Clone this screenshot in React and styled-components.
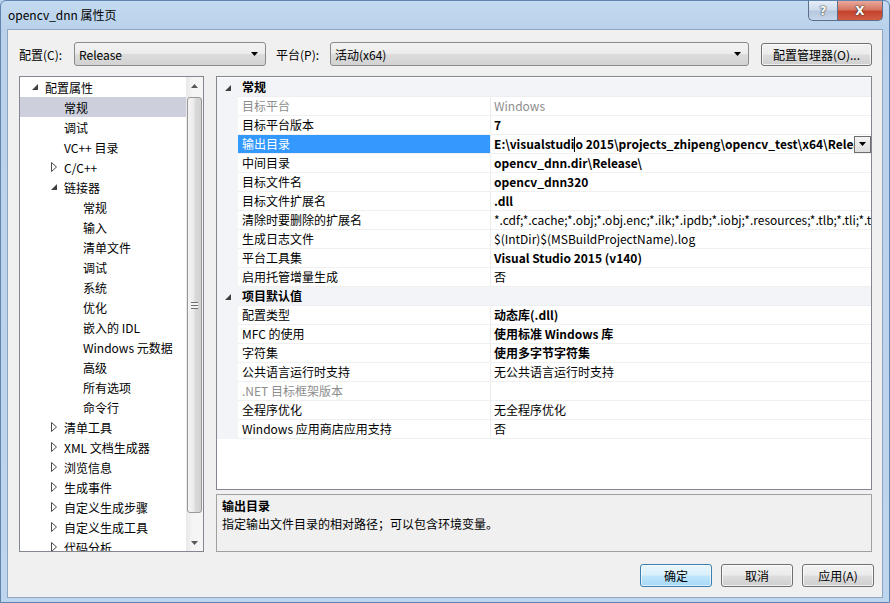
import React from "react";
import styled, { createGlobalStyle, css } from "styled-components";

const FONT = `"Noto Sans CJK SC", "Noto Sans", sans-serif`;

const Global = createGlobalStyle`
  html, body { margin: 0; padding: 0; background: #bcd4ee; }
  body { font-family: ${FONT}; font-size: 12px; color: #000; }
  * { box-sizing: border-box; }
`;

const Window = styled.div`
  width: 890px;
  height: 603px;
  display: flex;
  flex-direction: column;
  border: 1px solid #5f84ad;
  border-radius: 6px 6px 0 0;
  background: linear-gradient(to bottom, #c4daf2 0, #b9d1ea 28px, #bed5ee 100%);
  padding: 0 6px 4px 6px;
  overflow: hidden;
`;

const TitleBar = styled.div`
  height: 28px;
  display: flex;
  align-items: flex-start;
  flex-shrink: 0;
`;

const Title = styled.div`
  margin: 5px 0 0 1px;
  line-height: 18px;
  font-size: 12px;
  color: #000;
`;

const CaptionGroup = styled.div`
  margin-left: auto;
  display: flex;
`;

const CaptionButton = styled.div`
  height: 20px;
  width: ${(p) => p.$w}px;
  display: flex;
  align-items: center;
  justify-content: center;
  border: 1px solid #5b6f8c;
  border-top: none;
  font-family: "DejaVu Sans", sans-serif;
  font-weight: bold;
  font-size: 12px;
  color: #fff;
  text-shadow: 0 0 2px #333, 0 0 1px #222;
  ${(p) =>
    p.$close
      ? css`
          border-radius: 0 0 5px 0;
          background: linear-gradient(to bottom, #e9a99d 0, #d67663 45%, #c4432d 55%, #d25c45 100%);
        `
      : css`
          border-radius: 0 0 0 5px;
          border-right: none;
          background: linear-gradient(to bottom, #e6eef8 0, #cfdcec 45%, #b7c9df 55%, #c6d6ea 100%);
        `}
`;

const Client = styled.div`
  flex: 1;
  display: flex;
  flex-direction: column;
  background: #f0f0f0;
  border: 1px solid #8ea6c2;
  padding: 12px 10px 10px 11px;
`;

const Toolbar = styled.div`
  height: 24px;
  display: flex;
  align-items: center;
  flex-shrink: 0;
`;

const Label = styled.div`
  width: ${(p) => p.$w}px;
  margin-left: ${(p) => p.$ml || 0}px;
  white-space: nowrap;
`;

const Select = styled.div`
  height: 24px;
  ${(p) => (p.$w ? css`width: ${p.$w}px;` : css`flex: 1;`)}
  border: 1px solid #8a8a8a;
  border-radius: 3px;
  background: linear-gradient(to bottom, #f3f3f3 0, #ececec 48%, #dcdcdc 52%, #d2d2d2 100%);
  display: flex;
  align-items: center;
  padding: 0 7px 0 4px;
`;

const SelectText = styled.span`
  flex: 1;
`;

const Button = styled.div`
  height: ${(p) => p.$h || 23}px;
  width: ${(p) => p.$w}px;
  margin-left: ${(p) => p.$ml || 0}px;
  border: 1px solid ${(p) => (p.$default ? "#3c7fb1" : "#707070")};
  border-radius: 3px;
  display: flex;
  align-items: center;
  justify-content: center;
  white-space: nowrap;
  background: ${(p) =>
    p.$default
      ? "linear-gradient(to bottom, #eaf6fd 0, #d9f0fc 48%, #bee6fd 52%, #a7d9f5 100%)"
      : "linear-gradient(to bottom, #f2f2f2 0, #ebebeb 48%, #dddddd 52%, #cfcfcf 100%)"};
  box-shadow: inset 0 0 0 1px ${(p) => (p.$default ? "rgba(255,255,255,0.6)" : "rgba(255,255,255,0.7)")};
`;

const Panels = styled.div`
  margin-top: 10px;
  height: 476px;
  display: flex;
  gap: 12px;
  flex-shrink: 0;
`;

const TreePanel = styled.div`
  width: 185px;
  border: 1px solid #828790;
  background: #fff;
  display: flex;
`;

const TreeList = styled.div`
  flex: 1;
  overflow: hidden;
`;

const TreeRow = styled.div`
  height: 20px;
  display: flex;
  align-items: center;
  padding-left: ${(p) => 12 + p.$level * 19}px;
  white-space: nowrap;
  background: ${(p) => (p.$selected ? "#cdd0dc" : "transparent")};
`;

const ArrowBox = styled.span`
  width: 13px;
  height: 20px;
  display: flex;
  align-items: center;
  flex-shrink: 0;
`;

const ScrollBar = styled.div`
  width: 17px;
  display: flex;
  flex-direction: column;
  background: linear-gradient(to right, #e8e8e8, #f5f5f5 40%, #f5f5f5);
`;

const ScrollArrow = styled.div`
  height: 17px;
  display: flex;
  align-items: center;
  justify-content: center;
  flex-shrink: 0;
`;

const ScrollTrack = styled.div`
  flex: 1;
  padding-top: 3px;
`;

const Thumb = styled.div`
  height: 416px;
  margin: 0 1px;
  border: 1px solid #989898;
  border-radius: 3px;
  background: linear-gradient(to right, #f4f4f4 0, #ebebeb 45%, #dadada 55%, #d1d1d1 100%);
  display: flex;
  align-items: center;
  justify-content: center;
`;

const Grip = styled.div`
  width: 7px;
  height: 7px;
  background: repeating-linear-gradient(to bottom, #6f6f6f 0, #6f6f6f 1px, #f3f3f3 1px, #f3f3f3 3px);
`;

const RightColumn = styled.div`
  flex: 1;
  display: flex;
  flex-direction: column;
  gap: 4px;
`;

const Grid = styled.div`
  height: 414px;
  border: 1px solid #828790;
  background: #fff;
  overflow: hidden;
  padding-top: 1px;
`;

const Row = styled.div`
  height: 19px;
  display: grid;
  grid-template-columns: 21px 253px 1fr;
`;

const Gutter = styled.div`
  background: #f2f4f8;
  display: flex;
  align-items: center;
  justify-content: center;
`;

const CategoryCell = styled.div`
  grid-column: 2 / 4;
  background: #f2f4f8;
  border-bottom: 1px solid #eceef2;
  font-weight: bold;
  padding-left: 4px;
  line-height: 18px;
`;

const NameCell = styled.div`
  border-bottom: 1px solid #f0f0f0;
  border-right: 1px solid #ececec;
  padding-left: 4px;
  line-height: 18px;
  white-space: nowrap;
  overflow: hidden;
  color: ${(p) => (p.$selected ? "#fff" : p.$disabled ? "#8d8d8d" : "#000")};
  background: ${(p) => (p.$selected ? "#3399ff" : "transparent")};
`;

const ValueCell = styled.div`
  border-bottom: 1px solid #f0f0f0;
  padding-left: 3px;
  line-height: 18px;
  white-space: nowrap;
  overflow: hidden;
  display: flex;
  align-items: center;
  font-weight: ${(p) => (p.$bold ? "bold" : "normal")};
  color: ${(p) => (p.$disabled ? "#8d8d8d" : "#000")};
`;

const ValueText = styled.span`
  flex: 1;
  overflow: hidden;
  white-space: nowrap;
`;

const Caret = styled.span`
  display: inline-block;
  width: 1px;
  height: 15px;
  background: #000;
  vertical-align: -3px;
`;

const DropButton = styled.div`
  width: 17px;
  height: 17px;
  flex-shrink: 0;
  border: 1px solid #6e6e6e;
  background: linear-gradient(to bottom, #f4f4f4, #dedede);
  display: flex;
  align-items: center;
  justify-content: center;
`;

const Description = styled.div`
  height: 58px;
  border: 1px solid #a0a0a0;
  background: #f0f0f0;
  padding: 2px 5px;
  line-height: 18px;
`;

const DescTitle = styled.div`
  font-weight: bold;
`;

const Footer = styled.div`
  margin-top: 12px;
  height: 23px;
  display: flex;
  justify-content: flex-end;
  gap: 9px;
  margin-right: -2px;
`;

const ExpandedArrow = () => (
  <svg width="6" height="6" viewBox="0 0 6 6">
    <path d="M6 0 L6 6 L0 6 Z" fill="#404040" />
  </svg>
);

const CollapsedArrow = () => (
  <svg width="7" height="10" viewBox="0 0 7 10">
    <path d="M0.5 0.5 L5.5 5 L0.5 9.5 Z" fill="#fff" stroke="#4a4a4a" strokeWidth="1" />
  </svg>
);

const DownTri = ({ color = "#000" }) => (
  <svg width="7" height="4" viewBox="0 0 7 4">
    <path d="M0 0 L7 0 L3.5 4 Z" fill={color} />
  </svg>
);

const UpTri = ({ color = "#000" }) => (
  <svg width="7" height="4" viewBox="0 0 7 4">
    <path d="M0 4 L7 4 L3.5 0 Z" fill={color} />
  </svg>
);

const tree = [
  { level: 0, text: "配置属性", arrow: "open" },
  { level: 1, text: "常规", selected: true },
  { level: 1, text: "调试" },
  { level: 1, text: "VC++ 目录" },
  { level: 1, text: "C/C++", arrow: "closed" },
  { level: 1, text: "链接器", arrow: "open" },
  { level: 2, text: "常规" },
  { level: 2, text: "输入" },
  { level: 2, text: "清单文件" },
  { level: 2, text: "调试" },
  { level: 2, text: "系统" },
  { level: 2, text: "优化" },
  { level: 2, text: "嵌入的 IDL" },
  { level: 2, text: "Windows 元数据" },
  { level: 2, text: "高级" },
  { level: 2, text: "所有选项" },
  { level: 2, text: "命令行" },
  { level: 1, text: "清单工具", arrow: "closed" },
  { level: 1, text: "XML 文档生成器", arrow: "closed" },
  { level: 1, text: "浏览信息", arrow: "closed" },
  { level: 1, text: "生成事件", arrow: "closed" },
  { level: 1, text: "自定义生成步骤", arrow: "closed" },
  { level: 1, text: "自定义生成工具", arrow: "closed" },
  { level: 1, text: "代码分析", arrow: "closed" },
];

const props = [
  { cat: "常规" },
  { name: "目标平台", value: "Windows", disabled: true },
  { name: "目标平台版本", value: "7", bold: true },
  { name: "输出目录", selected: true, bold: true },
  { name: "中间目录", value: "opencv_dnn.dir\\Release\\", bold: true },
  { name: "目标文件名", value: "opencv_dnn320", bold: true },
  { name: "目标文件扩展名", value: ".dll", bold: true },
  { name: "清除时要删除的扩展名", value: "*.cdf;*.cache;*.obj;*.obj.enc;*.ilk;*.ipdb;*.iobj;*.resources;*.tlb;*.tli;*.tlh;*.tmp;*.rsp" },
  { name: "生成日志文件", value: "$(IntDir)$(MSBuildProjectName).log" },
  { name: "平台工具集", value: "Visual Studio 2015 (v140)", bold: true },
  { name: "启用托管增量生成", value: "否" },
  { cat: "项目默认值" },
  { name: "配置类型", value: "动态库(.dll)", bold: true },
  { name: "MFC 的使用", value: "使用标准 Windows 库", bold: true },
  { name: "字符集", value: "使用多字节字符集", bold: true },
  { name: "公共语言运行时支持", value: "无公共语言运行时支持" },
  { name: ".NET 目标框架版本", value: "", disabled: true },
  { name: "全程序优化", value: "无全程序优化" },
  { name: "Windows 应用商店应用支持", value: "否" },
];

export default function App() {
  return (
    <>
      <Global />
      <Window>
        <TitleBar>
          <Title>opencv_dnn 属性页</Title>
          <CaptionGroup>
            <CaptionButton $w={29}>?</CaptionButton>
            <CaptionButton $w={46} $close>X</CaptionButton>
          </CaptionGroup>
        </TitleBar>
        <Client>
          <Toolbar>
            <Label $w={55}>配置(C):</Label>
            <Select $w={192}>
              <SelectText>Release</SelectText>
              <DownTri />
            </Select>
            <Label $w={54} $ml={10}>平台(P):</Label>
            <Select>
              <SelectText>活动(x64)</SelectText>
              <DownTri />
            </Select>
            <Button $w={111} $h={23} $ml={12}>配置管理器(O)...</Button>
          </Toolbar>
          <Panels>
            <TreePanel>
              <TreeList>
                {tree.map((t, i) => (
                  <TreeRow key={i} $level={t.level} $selected={t.selected}>
                    <ArrowBox>
                      {t.arrow === "open" && <ExpandedArrow />}
                      {t.arrow === "closed" && <CollapsedArrow />}
                    </ArrowBox>
                    {t.text}
                  </TreeRow>
                ))}
              </TreeList>
              <ScrollBar>
                <ScrollArrow>
                  <UpTri color="#5a5a5a" />
                </ScrollArrow>
                <ScrollTrack>
                  <Thumb>
                    <Grip />
                  </Thumb>
                </ScrollTrack>
                <ScrollArrow>
                  <DownTri color="#5a5a5a" />
                </ScrollArrow>
              </ScrollBar>
            </TreePanel>
            <RightColumn>
              <Grid>
                {props.map((p, i) =>
                  p.cat ? (
                    <Row key={i}>
                      <Gutter>
                        <ExpandedArrow />
                      </Gutter>
                      <CategoryCell>{p.cat}</CategoryCell>
                    </Row>
                  ) : (
                    <Row key={i}>
                      <Gutter />
                      <NameCell $selected={p.selected} $disabled={p.disabled}>
                        {p.name}
                      </NameCell>
                      {p.selected ? (
                        <ValueCell $bold>
                          <ValueText>
                            E:\visualstudi
                            <Caret />
                            o 2015\projects_zhipeng\opencv_test\x64\Release\
                          </ValueText>
                          <DropButton>
                            <DownTri />
                          </DropButton>
                        </ValueCell>
                      ) : (
                        <ValueCell $bold={p.bold} $disabled={p.disabled}>
                          {p.value}
                        </ValueCell>
                      )}
                    </Row>
                  )
                )}
              </Grid>
              <Description>
                <DescTitle>输出目录</DescTitle>
                <div>指定输出文件目录的相对路径；可以包含环境变量。</div>
              </Description>
            </RightColumn>
          </Panels>
          <Footer>
            <Button $w={72} $default>确定</Button>
            <Button $w={72}>取消</Button>
            <Button $w={72}>应用(A)</Button>
          </Footer>
        </Client>
      </Window>
    </>
  );
}
